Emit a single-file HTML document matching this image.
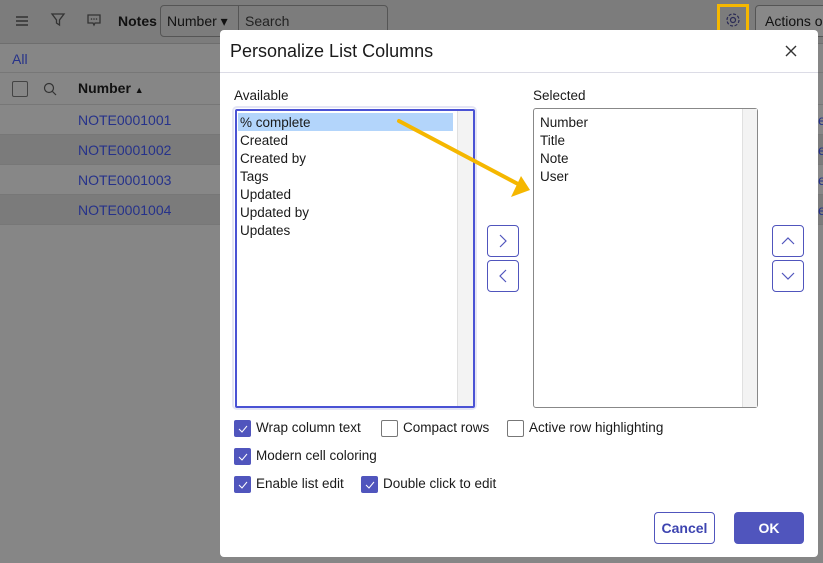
<!DOCTYPE html>
<html><head><style>
*{box-sizing:border-box;margin:0;padding:0}
body{width:823px;height:563px;overflow:hidden;background:#868686;font-family:"Liberation Sans",sans-serif;position:relative;color:#1a1a1a}
.a{position:absolute}
.top{left:0;top:0;width:823px;height:44px;background:#7c7c7c;border-bottom:1px solid #6e6e6e}
.row{left:0;width:823px;height:30px;border-bottom:1px solid #777}
.lnk{color:#26328a;font-size:14px}
.dlg{left:220px;top:30px;width:598px;height:527px;background:#fff;border-radius:4px}
.t{font-size:13.5px;color:#1a1a1a}
.cb{width:17px;height:17px;border-radius:2px;background:#5055bd}
.cb.u{background:#fff;border:1px solid #777}
.sb{width:32px;height:32px;border:1px solid #5055bd;border-radius:4px;background:#fff}
</style></head><body>
<div class="a top"></div>
<div class="a" style="left:16px;top:16px;width:12px;height:2px;background:#444;box-shadow:0 4px 0 #444,0 8px 0 #444"></div>
<svg class="a" style="left:50px;top:12px" width="16" height="16"><path d="M2 2h12l-4.5 6v5l-3-2V8z" fill="none" stroke="#333" stroke-width="1.3"/></svg>
<svg class="a" style="left:86px;top:13px" width="16" height="14"><path d="M2 2h12v8H9l-1 2-1-2H2z" fill="none" stroke="#333" stroke-width="1.3"/><circle cx="5.5" cy="6" r=".8" fill="#333"/><circle cx="8" cy="6" r=".8" fill="#333"/><circle cx="10.5" cy="6" r=".8" fill="#333"/></svg>
<div class="a" style="left:118px;top:13px;font-size:14px;font-weight:bold;color:#111">Notes</div>
<div class="a" style="left:160px;top:5px;width:228px;height:32px;border:1px solid #555;border-radius:4px"></div>
<div class="a" style="left:238px;top:5px;width:1px;height:32px;background:#555"></div>
<div class="a" style="left:167px;top:13px;font-size:14px;color:#111">Number ▾</div>
<div class="a" style="left:245px;top:13px;font-size:14px;color:#222">Search</div>
<div class="a" style="left:755px;top:5px;width:80px;height:32px;border:1px solid #555;border-radius:4px;background:#888"></div>
<div class="a" style="left:765px;top:13px;font-size:14px;color:#111">Actions o</div>
<svg class="a" style="left:725px;top:12px" width="16" height="16"><circle cx="8" cy="8" r="2.5" fill="none" stroke="#2a2a55" stroke-width="1.2"/><circle cx="8" cy="8" r="6" fill="none" stroke="#2a2a55" stroke-width="1.2" stroke-dasharray="3 1.7"/></svg>
<div class="a" style="left:717px;top:4px;width:32px;height:35px;border:3px solid #f5b700"></div>
<div class="a lnk" style="left:12px;top:51px">All</div>
<div class="a" style="left:0;top:72px;width:823px;height:1px;background:#777"></div>
<div class="a" style="left:12px;top:81px;width:16px;height:16px;border:1px solid #444;border-radius:2px"></div>
<svg class="a" style="left:43px;top:82px" width="14" height="14"><circle cx="6" cy="6" r="4.5" fill="none" stroke="#333" stroke-width="1.2"/><path d="M9.5 9.5L13 13" stroke="#333" stroke-width="1.2"/></svg>
<div class="a" style="left:78px;top:80px;font-size:14px;font-weight:bold;color:#111">Number <span style="font-size:9px">▲</span></div>
<div class="a" style="left:0;top:104px;width:823px;height:1px;background:#777"></div>
<div class="a row" style="top:105px;background:#878787"></div>
<div class="a row" style="top:135px;background:#7b7b7b"></div>
<div class="a row" style="top:165px;background:#878787"></div>
<div class="a row" style="top:195px;background:#7b7b7b"></div>
<div class="a lnk" style="left:78px;top:112px">NOTE0001001</div>
<div class="a lnk" style="left:78px;top:142px">NOTE0001002</div>
<div class="a lnk" style="left:78px;top:172px">NOTE0001003</div>
<div class="a lnk" style="left:78px;top:202px">NOTE0001004</div>
<div class="a lnk" style="left:818px;top:112px">e</div>
<div class="a lnk" style="left:818px;top:142px">e</div>
<div class="a lnk" style="left:818px;top:172px">e</div>
<div class="a lnk" style="left:818px;top:202px">e</div>

<div class="a dlg"></div>
<div class="a" style="left:230px;top:41px;font-size:18px;color:#1a1a1a">Personalize List Columns</div>
<svg class="a" style="left:785px;top:45px" width="12" height="12"><path d="M1 1L11 11M11 1L1 11" stroke="#333" stroke-width="1.4"/></svg>
<div class="a" style="left:220px;top:72px;width:598px;height:1px;background:#dcdce6"></div>
<div class="a t" style="left:234px;top:88px">Available</div>
<div class="a t" style="left:533px;top:88px">Selected</div>
<div class="a" style="left:232px;top:106px;width:245px;height:304px;border:2px solid #e4e5f5;border-radius:5px"></div>
<div class="a" style="left:235px;top:109px;width:240px;height:299px;border:2px solid #4a52d4;border-radius:2px"></div>
<div class="a" style="left:457px;top:111px;width:16px;height:295px;background:#f3f3f3;border-left:1px solid #e0e0e0"></div>
<div class="a" style="left:238px;top:113px;width:215px;height:18px;background:#b3d5fb"></div>
<div class="a t" style="left:240px;top:114px;line-height:18px">% complete<br>Created<br>Created by<br>Tags<br>Updated<br>Updated by<br>Updates</div>
<div class="a" style="left:533px;top:108px;width:225px;height:300px;border:1px solid #888;border-radius:3px"></div>
<div class="a" style="left:742px;top:109px;width:15px;height:298px;background:#f3f3f3;border-left:1px solid #e0e0e0"></div>
<div class="a t" style="left:540px;top:114px;line-height:18px">Number<br>Title<br>Note<br>User</div>
<div class="a sb" style="left:487px;top:225px"></div>
<div class="a sb" style="left:487px;top:260px"></div>
<div class="a sb" style="left:772px;top:225px"></div>
<div class="a sb" style="left:772px;top:260px"></div>
<svg class="a" style="left:487px;top:225px" width="32" height="68"><path d="M13 10l6 6-6 6" fill="none" stroke="#5055bd" stroke-width="1.2"/><path d="M19 45l-6 6 6 6" fill="none" stroke="#5055bd" stroke-width="1.2"/></svg>
<svg class="a" style="left:772px;top:225px" width="32" height="68"><path d="M10 19l6-6 6 6" fill="none" stroke="#5055bd" stroke-width="1.2"/><path d="M10 48l6 6 6-6" fill="none" stroke="#5055bd" stroke-width="1.2"/></svg>
<svg class="a" style="left:390px;top:110px" width="150" height="100"><path d="M9 11L128 74" stroke="#f5b700" stroke-width="4" stroke-linecap="round"/><path d="M140 80L121 87L131 66Z" fill="#f5b700"/></svg>

<div class="a cb" style="left:234px;top:420px"></div>
<div class="a t" style="left:256px;top:420px">Wrap column text</div>
<div class="a cb u" style="left:381px;top:420px"></div>
<div class="a t" style="left:403px;top:420px">Compact rows</div>
<div class="a cb u" style="left:507px;top:420px"></div>
<div class="a t" style="left:529px;top:420px">Active row highlighting</div>
<div class="a cb" style="left:234px;top:448px"></div>
<div class="a t" style="left:256px;top:448px">Modern cell coloring</div>
<div class="a cb" style="left:234px;top:476px"></div>
<div class="a t" style="left:256px;top:476px">Enable list edit</div>
<div class="a cb" style="left:361px;top:476px"></div>
<div class="a t" style="left:383px;top:476px">Double click to edit</div>
<svg class="a" style="left:234px;top:420px" width="150" height="74"><g fill="none" stroke="#fff" stroke-width="1"><path d="M5 9l3 3 5-6"/><path d="M5 37l3 3 5-6"/><path d="M5 65l3 3 5-6"/><path d="M132 65l3 3 5-6"/></g></svg>
<div class="a" style="left:654px;top:512px;width:61px;height:32px;border:1px solid #5055bd;border-radius:4px;color:#3d44b0;font-size:14px;font-weight:bold;text-align:center;line-height:30px">Cancel</div>
<div class="a" style="left:734px;top:512px;width:70px;height:32px;background:#5055bd;border-radius:4px;color:#fff;font-size:14px;font-weight:bold;text-align:center;line-height:32px">OK</div>
</body></html>
